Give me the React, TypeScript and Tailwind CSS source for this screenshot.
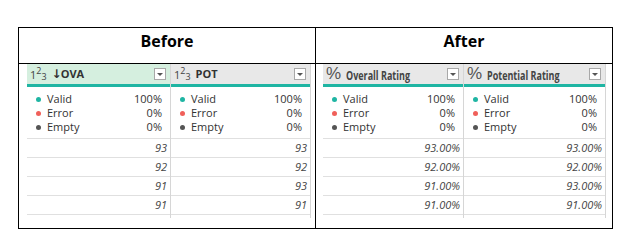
import React from "react";

const teal = "bg-[#1fb5a3]";

function DropBox() {
  return (
    <div className="w-[12px] h-[12px] bg-white border border-[#a8a8a8] flex items-center justify-center shrink-0">
      <div className="w-0 h-0 border-l-[3px] border-r-[3px] border-t-[3px] border-l-transparent border-r-transparent border-t-[#555]" />
    </div>
  );
}

function IntIcon() {
  return (
    <span className="text-[#444] text-[11px] leading-none font-['Open_Sans',sans-serif] flex items-start shrink-0">
      <span className="mt-[2px]">1</span>
      <span className="text-[9px] -mt-[1px]">2</span>
      <span className="text-[9px] mt-[5px]">3</span>
    </span>
  );
}

function PctIcon() {
  return (
    <span className="text-[#555] text-[17px] leading-none font-['Liberation_Sans',sans-serif] shrink-0 -mt-[1px]">%</span>
  );
}

type ColProps = {
  width: string;
  headerBg: string;
  icon: React.ReactNode;
  title: React.ReactNode;
  values: string[];
};

function Stat({ dot, label, pct }: { dot: string; label: string; pct: string }) {
  return (
    <div className="flex items-center h-[14px]">
      <span className={`w-[5px] h-[5px] rounded-full ${dot} mr-[6px]`} />
      <span className="flex-1 text-[#333]">{label}</span>
      <span className="text-[#333]">{pct}</span>
    </div>
  );
}

function Column({ width, headerBg, icon, title, values }: ColProps) {
  return (
    <div className={`${width} border-r border-[#d6d6d6] flex flex-col shrink-0`}>
      <div className={`h-[20px] ${headerBg} flex items-center pl-[3px] pr-[4px] gap-[5px]`}>
        {icon}
        <div className="flex-1 min-w-0 overflow-visible">{title}</div>
        <DropBox />
      </div>
      <div className={`h-[3px] ${teal}`} />
      <div className="pt-[5px] pb-[4px] pl-[9px] pr-[8px] text-[11px] leading-[14px] font-['Open_Sans',sans-serif] border-b border-[#e0e0e0]">
        <Stat dot="bg-[#1fb5a3]" label="Valid" pct="100%" />
        <Stat dot="bg-[#f0605a]" label="Error" pct="0%" />
        <Stat dot="bg-[#555]" label="Empty" pct="0%" />
      </div>
      {values.map((v, i) => (
        <div
          key={i}
          className="h-[19px] border-b border-[#e0e0e0] flex items-center justify-end pr-[3px] italic text-[11px] text-[#444] font-['Open_Sans',sans-serif]"
        >
          {v}
        </div>
      ))}
      <div className="h-[3px]" />
    </div>
  );
}

export default function App() {
  const beforeTitle = (t: string) => (
    <span className="font-bold text-[11px] text-[#333] font-['Open_Sans',sans-serif] whitespace-nowrap flex items-center">
      {t.startsWith("↓") ? (
        <>
          <span className="font-['DejaVu_Sans',sans-serif] text-[12px] font-bold -mr-[1px]">↓</span>
          {t.slice(1)}
        </>
      ) : (
        t
      )}
    </span>
  );
  const afterTitle = (t: string) => (
    <span className="inline-block origin-left scale-x-[0.72] font-bold text-[12.5px] text-[#444] font-['Open_Sans',sans-serif] whitespace-nowrap">
      {t}
    </span>
  );
  return (
    <div className="w-[630px] h-[246px] bg-white pt-[27px] pl-[18px]">
      <div className="w-[595px] border border-black grid grid-cols-[297px_296px] font-['Open_Sans',sans-serif]">
        <div className="h-[36px] border-b border-r border-black flex justify-center pt-[2px] text-[16px] leading-[22px] font-bold text-black">
          Before
        </div>
        <div className="h-[36px] border-b border-black flex justify-center pt-[2px] text-[16px] leading-[22px] font-bold text-black">
          After
        </div>
        <div className="h-[164px] border-r border-black pl-[8px] flex items-start">
          <Column
            width="w-[144px]"
            headerBg="bg-[#d5efdf]"
            icon={<IntIcon />}
            title={beforeTitle("↓OVA")}
            values={["93", "92", "91", "91"]}
          />
          <Column
            width="w-[140px]"
            headerBg="bg-[#e8e8e8]"
            icon={<IntIcon />}
            title={beforeTitle("POT")}
            values={["93", "92", "93", "91"]}
          />
        </div>
        <div className="h-[164px] pl-[7px] flex items-start">
          <Column
            width="w-[141px]"
            headerBg="bg-[#e8e8e8]"
            icon={<PctIcon />}
            title={afterTitle("Overall Rating")}
            values={["93.00%", "92.00%", "91.00%", "91.00%"]}
          />
          <Column
            width="w-[142px]"
            headerBg="bg-[#e8e8e8]"
            icon={<PctIcon />}
            title={afterTitle("Potential Rating")}
            values={["93.00%", "92.00%", "93.00%", "91.00%"]}
          />
        </div>
      </div>
    </div>
  );
}
